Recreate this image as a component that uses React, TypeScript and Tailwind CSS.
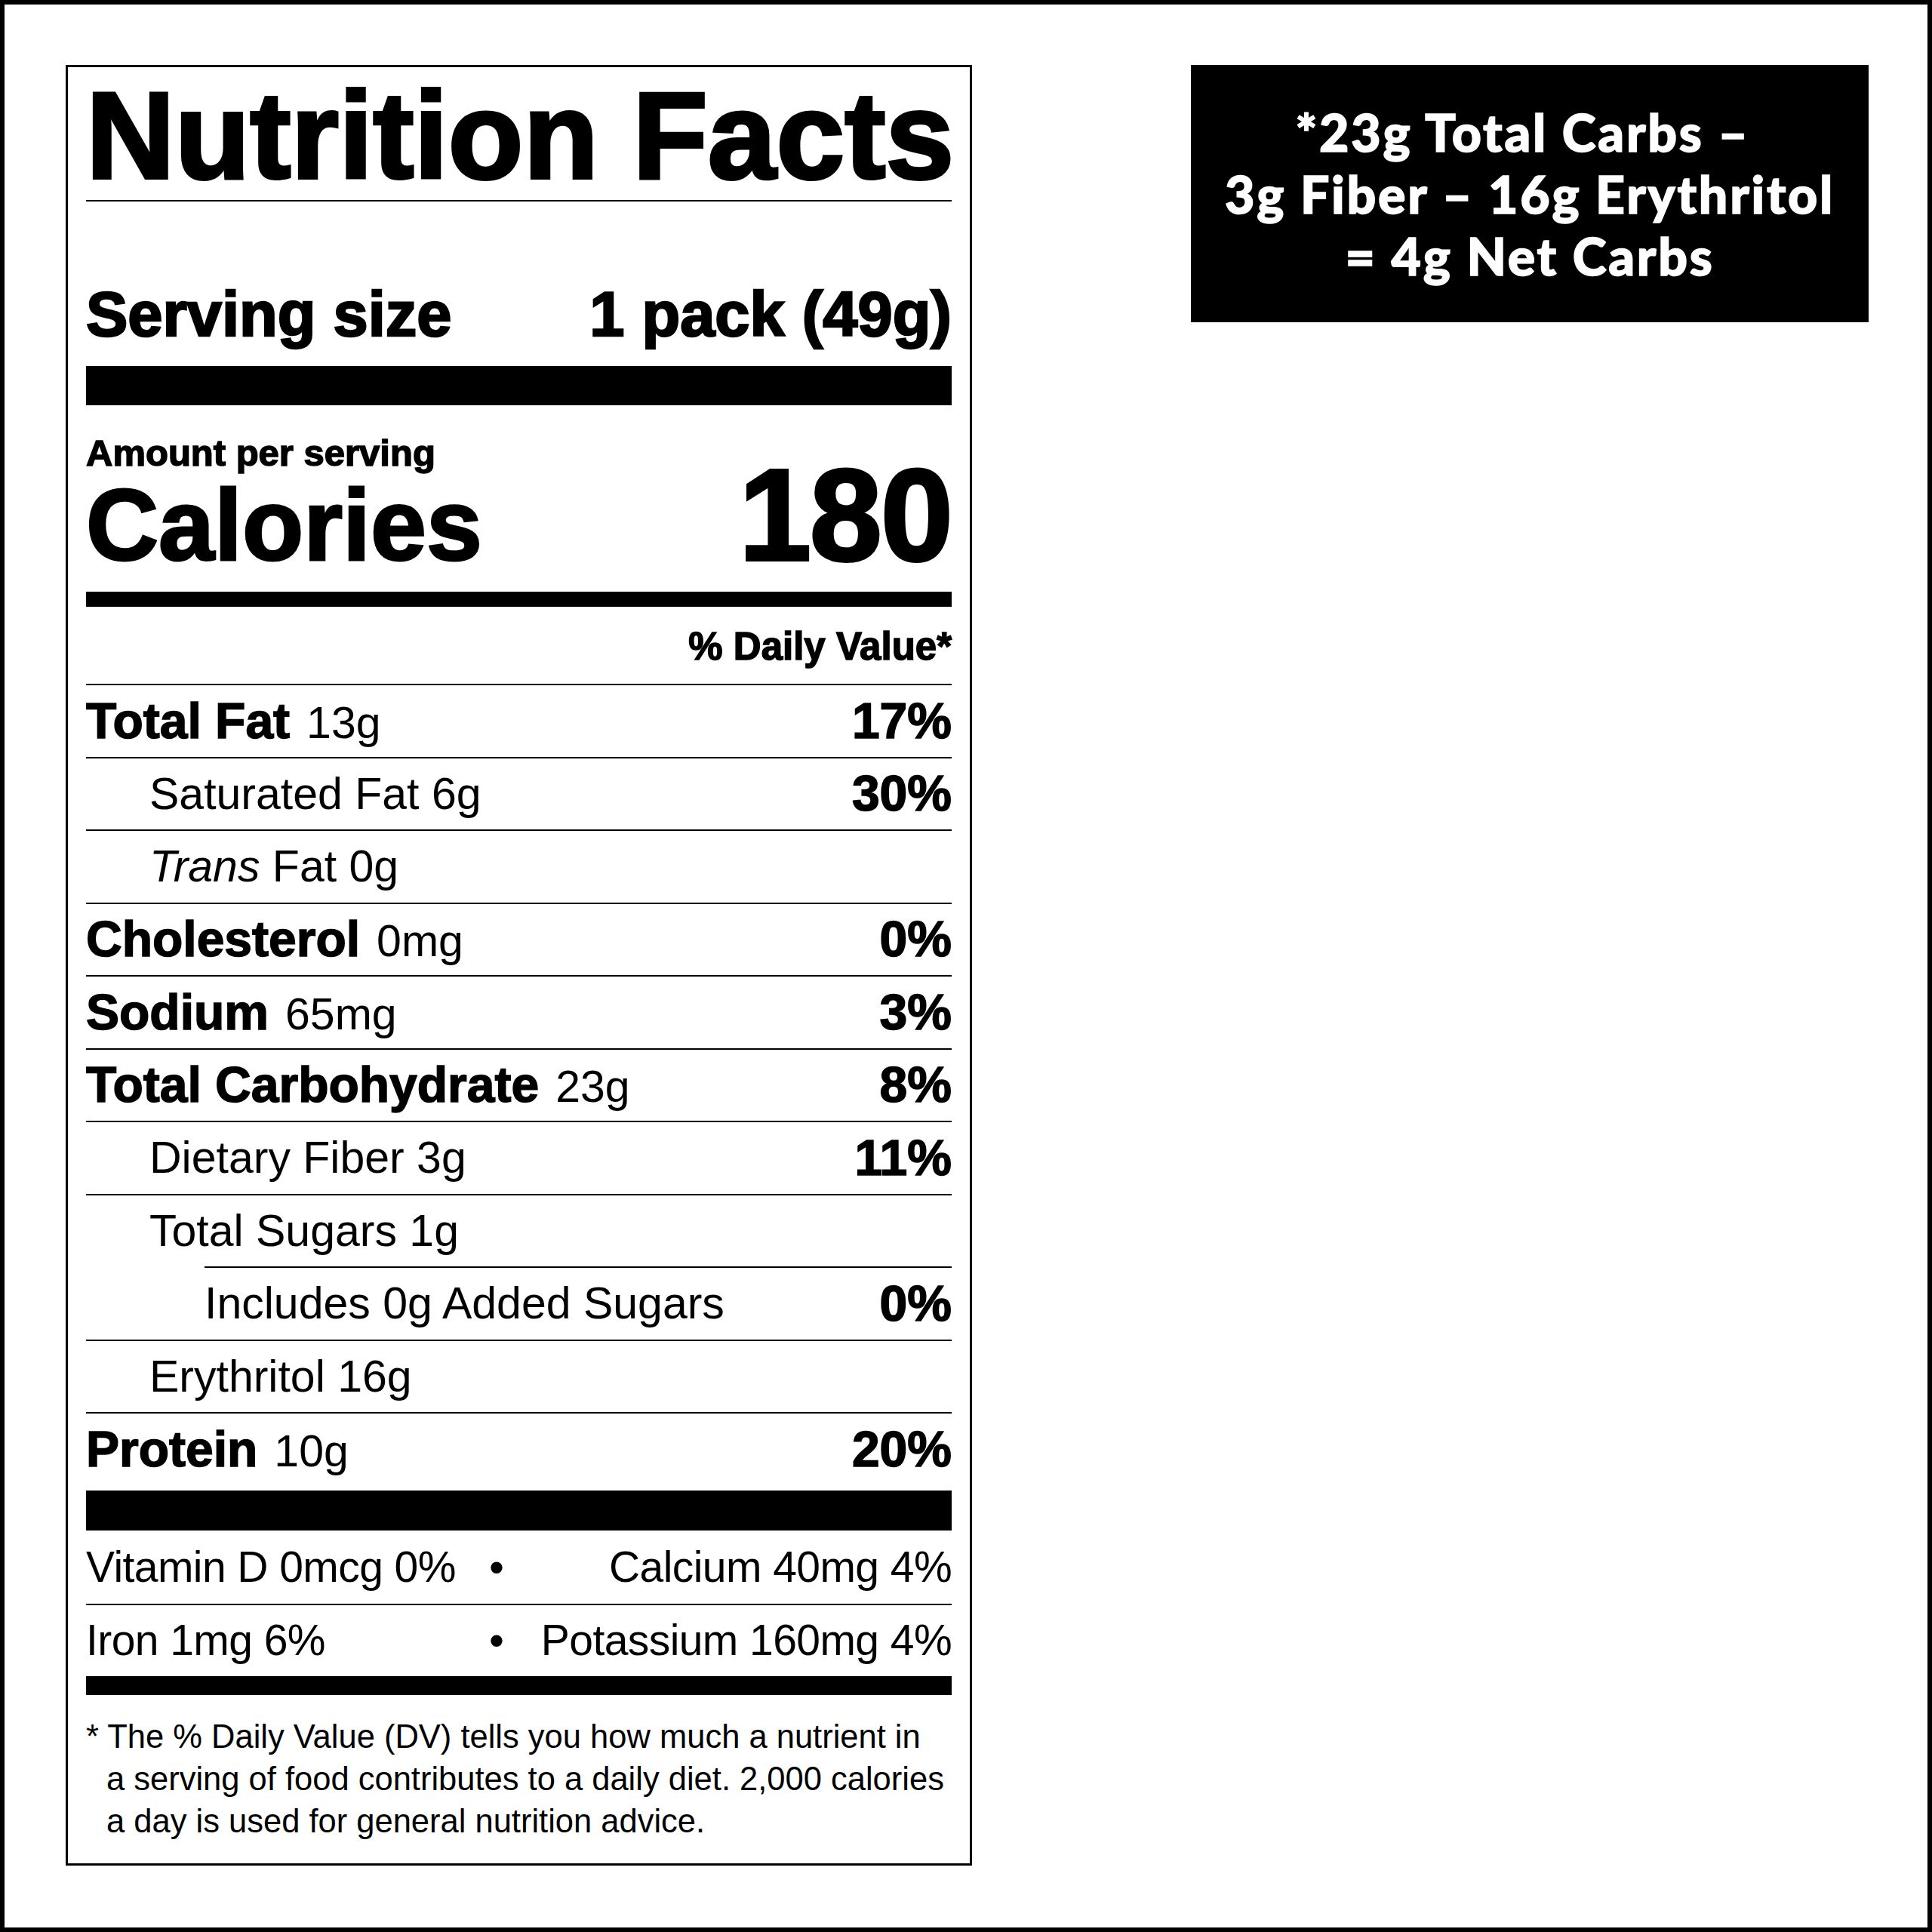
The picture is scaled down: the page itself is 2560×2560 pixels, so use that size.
import React from 'react';

type Row = {
  label: string;
  amount?: string;
  dv?: string;
  bold?: boolean;
  indent?: 0 | 1 | 2;
  italicPrefix?: string;
};

const rows: Row[] = [
  { label: 'Total Fat', amount: '13g', dv: '17%', bold: true },
  { label: 'Saturated Fat 6g', dv: '30%', indent: 1 },
  { label: 'Fat 0g', italicPrefix: 'Trans', indent: 1 },
  { label: 'Cholesterol', amount: '0mg', dv: '0%', bold: true },
  { label: 'Sodium', amount: '65mg', dv: '3%', bold: true },
  { label: 'Total Carbohydrate', amount: '23g', dv: '8%', bold: true },
  { label: 'Dietary Fiber 3g', dv: '11%', indent: 1 },
  { label: 'Total Sugars 1g', indent: 1 },
  { label: 'Includes 0g Added Sugars', dv: '0%', indent: 2 },
  { label: 'Erythritol 16g', indent: 1 },
  { label: 'Protein', amount: '10g', dv: '20%', bold: true },
];

// Liberation Sans Bold is lighter than the label's black face, so thicken it a bit
const heavy = 'font-bold [-webkit-text-stroke:1.5px_black]';

const NutrientRow: React.FC<{ row: Row }> = ({ row }) => {
  // the "Includes" line only runs under its own text, so the rule is indented too
  const outer = row.indent === 2 ? 'ml-[157px]' : '';
  const inner = row.indent === 1 ? 'pl-[84px]' : '';
  return (
    <div className={`${outer} border-t-2 border-black h-[96.5px] flex items-center justify-between`}>
      <div className={`${inner} whitespace-nowrap flex items-baseline`}>
        {row.bold ? (
          <>
            <span className={`${heavy} text-[66px]`}>{row.label}</span>
            <span className="ml-[22px] text-[59px]">{row.amount}</span>
          </>
        ) : (
          <span className="text-[59px]">
            {row.italicPrefix && <i>{row.italicPrefix} </i>}
            {row.label}
          </span>
        )}
      </div>
      {row.dv && <span className={`${heavy} text-[66px]`}>{row.dv}</span>}
    </div>
  );
};

export default function App() {
  return (
    <div className="w-[2560px] h-[2560px] border-[6px] border-black bg-white flex items-start pt-[80px] pl-[81px] text-black font-['Liberation_Sans',Arial,sans-serif]">
      {/* Nutrition label */}
      <div className="w-[1201px] shrink-0 border-[3px] border-black px-[24px] pt-[10px] pb-[28px]">
        <h1 className="text-[163px] leading-[162px] font-bold whitespace-nowrap [-webkit-text-stroke:4px_black]">
          Nutrition Facts
        </h1>
        <div className="h-[2px] bg-black mt-[4px]" />

        <div className="mt-[108px] h-[83px] flex items-center justify-between text-[83px] leading-[83px] font-bold whitespace-nowrap [-webkit-text-stroke:2.5px_black]">
          <span>Serving size</span>
          <span>1 pack (49g)</span>
        </div>
        <div className="h-[52px] bg-black mt-[27px]" />

        <div className="mt-[39px] flex items-end justify-between">
          <div>
            <div className="text-[49px] leading-[49px] font-bold [-webkit-text-stroke:1.5px_black]">Amount per serving</div>
            <div className="mt-[16px] text-[133px] leading-[110px] font-bold [-webkit-text-stroke:3px_black]">Calories</div>
          </div>
          <div className="text-[172px] leading-[137px] font-bold tracking-[-0.01em] [-webkit-text-stroke:4px_black]">180</div>
        </div>
        <div className="h-[20px] bg-black mt-[33px]" />

        <div className={`h-[102px] pt-[4px] flex items-center justify-end text-[51px] ${heavy}`}>% Daily Value*</div>

        {rows.map((r) => (
          <NutrientRow key={r.label} row={r} />
        ))}
        <div className="h-[53px] bg-black mt-[7.5px]" />

        <div className="h-[97px] flex items-center text-[57px] tracking-[-0.01em] whitespace-nowrap">
          <span className="w-[534px]">Vitamin D 0mcg 0%</span>
          <span>•</span>
          <span className="flex-1 text-right">Calcium 40mg 4%</span>
        </div>
        <div className="h-[96px] border-t-2 border-black flex items-center text-[57px] tracking-[-0.01em] whitespace-nowrap">
          <span className="w-[534px]">Iron 1mg 6%</span>
          <span>•</span>
          <span className="flex-1 text-right">Potassium 160mg 4%</span>
        </div>
        <div className="h-[25px] bg-black" />

        <p className="mt-[27px] text-[43.5px] leading-[56px] pl-[27px] -indent-[27px] whitespace-nowrap">
          * The % Daily Value (DV) tells you how much a nutrient in
          <br />
          a serving of food contributes to a daily diet. 2,000 calories
          <br />
          a day is used for general nutrition advice.
        </p>
      </div>

      {/* Net carbs callout */}
      <div className="ml-[290px] w-[898px] h-[341px] shrink-0 bg-black flex items-center justify-center">
        <p className="text-white text-center font-['Lato','Open_Sans',sans-serif] font-black text-[68px] leading-[82px] tracking-[0.04em] whitespace-nowrap [-webkit-text-stroke:1.5px_white]">
          *23g Total Carbs –&nbsp;
          <br />
          3g Fiber – 16g Erythritol
          <br />= 4g Net Carbs
        </p>
      </div>
    </div>
  );
}
